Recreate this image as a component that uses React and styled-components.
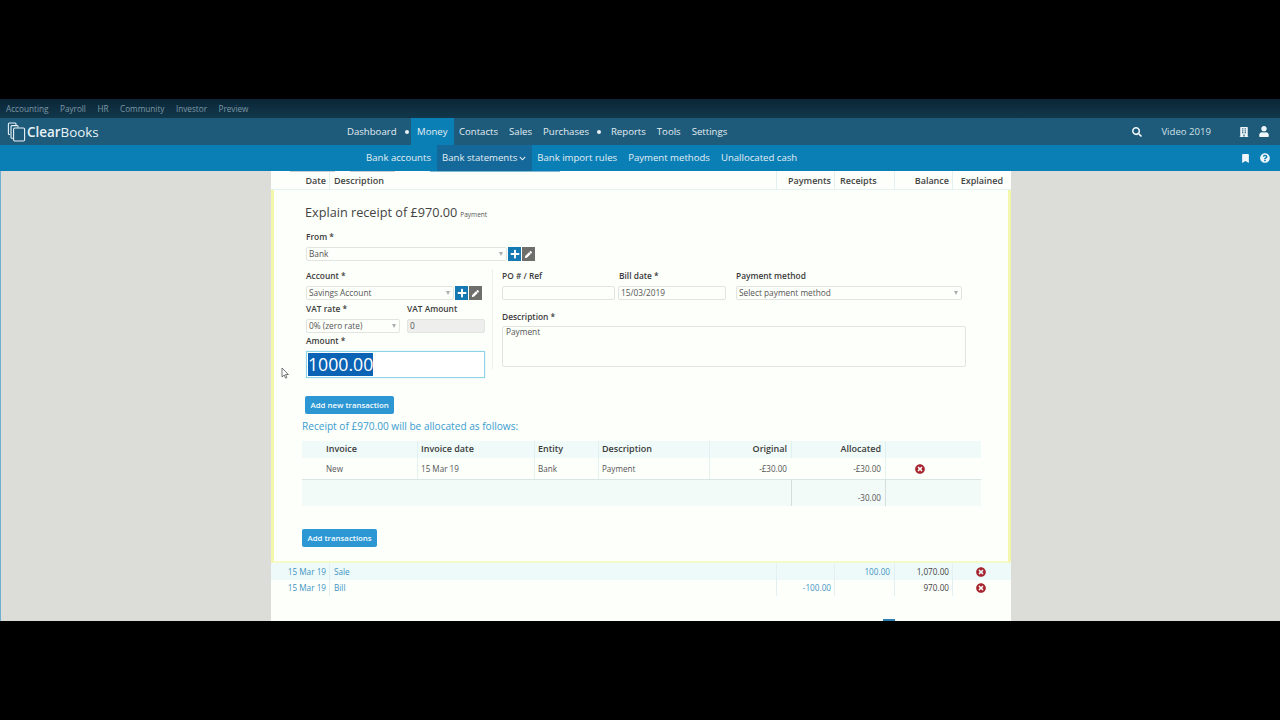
import React from 'react'
import styled, { createGlobalStyle } from 'styled-components'
import {
  FaSearch, FaBuilding, FaUser, FaBookmark, FaQuestionCircle,
  FaPlus, FaPen, FaChevronDown, FaTimesCircle,
} from 'react-icons/fa'

const Global = createGlobalStyle`
  html, body { margin: 0; background: #000; }
  body { font-family: "Open Sans", "Liberation Sans", sans-serif; color: #333; }
  * { box-sizing: border-box; }
`

const Letterbox = styled.div`
  width: 1280px;
  height: 720px;
  padding: 99px 0;
  background: #000;
  display: flex;
  flex-direction: column;
  overflow: hidden;
`

const TopBar = styled.div`
  height: 19px;
  flex: none;
  display: flex;
  align-items: center;
  gap: 11.5px;
  padding-left: 6px;
  background: linear-gradient(#0b2636, #12384c);
  a { font-size: 8.2px; color: #7d98a6; }
`

const Header = styled.header`
  height: 27px;
  flex: none;
  display: grid;
  grid-template-columns: 341.5px 1fr auto;
  background: #1e5a79;
  color: #dbe9f0;
`

const Brand = styled.div`
  display: flex;
  align-items: center;
  padding-left: 7px;
  font-size: 13.4px;
  color: #e8f2f7;
  b { font-weight: 600; }
`

const Nav = styled.nav`
  display: flex;
  align-items: stretch;
`

const NavItem = styled.a`
  display: flex;
  align-items: center;
  padding: 0 ${p => p.$pad || 5.5}px ${p => p.$lift || 0}px;
  font-size: 9.6px;
  color: #e3eef4;
  background: ${p => (p.$active ? p.$active : 'transparent')};
`

const NavDot = styled.span`
  align-self: center;
  width: 4px;
  height: 4px;
  margin: 0 ${p => p.$mr}px 0 3px;
  border-radius: 50%;
  background: #e8f2f7;
`

const HeaderRight = styled.div`
  display: flex;
  align-items: center;
  padding-right: 11px;
  font-size: 9.6px;
  svg { display: block; }
`

const Account = styled.span`
  margin: 0 28px 0 19px;
  color: #cfe0e9;
`

const UserIcon = styled(FaUser)`
  width: 10px;
  height: 11px;
  margin-left: 10px;
  color: #eef6fa;
`

const SubNav = styled.div`
  height: 26px;
  flex: none;
  display: grid;
  grid-template-columns: 360.5px 1fr auto;
  background: #0a7fb5;
`

const Chevron = styled(FaChevronDown)`
  width: 7px;
  height: 7px;
  margin: 2px 0 0 2px;
`

const SubRight = styled.div`
  display: flex;
  align-items: center;
  gap: 10px;
  padding-right: 10px;
  color: #eef6fa;
`

const Stage = styled.main`
  flex: 1;
  min-height: 0;
  display: flex;
  justify-content: center;
  position: relative;
  background: #dcddd9;
  border-left: 1px solid #6fb0d0;
  padding-left: 1px;
`

const Sheet = styled.div`
  width: 740px;
  position: relative;
  background: #fdfffb;
  font-size: 9px;
`

const ClippedRow = styled.span`
  position: absolute;
  left: 19px;
  top: 0;
  width: 270px;
  height: 1px;
  background: linear-gradient(90deg,
    #c9cfd2 0 45px, transparent 45px 60px,
    #c9cfd2 60px 105px, transparent 105px 140px,
    #7fb7d6 140px 270px);
`

const StatementGrid = styled.div`
  display: grid;
  grid-template-columns: 58px 447px 58px 60px 58px 59px;
  height: ${p => p.$h}px;
  background: ${p => p.$bg || 'transparent'};
  border-bottom: ${p => (p.$line ? '1px solid #e4f3f1' : 'none')};
`

const Cell = styled.div`
  display: flex;
  align-items: center;
  justify-content: ${p => p.$align || 'flex-end'};
  padding: 0 ${p => p.$padR ?? 3}px ${p => p.$lift || 0}px ${p => p.$padL ?? 4}px;
  font-size: ${p => (p.$head ? 9 : 8.2)}px;
  font-weight: ${p => (p.$head ? 600 : 400)};
  color: ${p => p.$color || '#444'};
  border-left: ${p => (p.$edge ? '1px solid #e2f0f2' : 'none')};
`

const FormPanel = styled.section`
  height: 373px;
  border-left: 3px solid #f3f7ac;
  border-right: 3px solid #f3f7ac;
  border-bottom: 2px solid #f6f9c8;
  padding-left: 28px;
  padding-top: 14px;
`

const Title = styled.h2`
  margin: 0 0 8px 3px;
  height: 18px;
  font-size: 12.7px;
  line-height: 16px;
  font-weight: 400;
  color: #444;
  small { font-size: 6.5px; margin-left: 3px; color: #555; }
`

const FormArea = styled.div`
  padding-left: 4px;
`

const Field = styled.div`
  display: flex;
  flex-direction: column;
  width: ${p => (p.$w ? `${p.$w}px` : 'auto')};
  margin-top: ${p => p.$top || 0}px;
`

const Label = styled.label`
  height: 14px;
  margin-bottom: ${p => p.$mb ?? 3}px;
  padding-left: ${p => p.$indent || 0}px;
  font-size: 8.4px;
  line-height: 14px;
  font-weight: 600;
  color: #3c3c3c;
`

const Control = styled.div`
  height: ${p => p.$h || 14}px;
  width: ${p => (p.$w ? `${p.$w}px` : '100%')};
  display: flex;
  align-items: ${p => (p.$top ? 'flex-start' : 'center')};
  justify-content: space-between;
  padding: 0 3px ${p => (p.$top ? 0 : 2)}px ${p => (p.$top ? 3 : 2)}px;
  border: 1px solid #e2e4e0;
  border-radius: 2px;
  background: ${p => p.$bg || '#fdfffb'};
  font-size: 8.3px;
  line-height: ${p => (p.$top ? 9 : 11)}px;
  color: #555;
`

const Caret = styled.span`
  width: 0;
  height: 0;
  margin-top: 2px;
  border-left: 2.5px solid transparent;
  border-right: 2.5px solid transparent;
  border-top: 4px solid #a9aeb0;
`

const SelectRow = styled.div`
  display: flex;
  width: ${p => p.$w}px;
  gap: 1px;
`

const IconBtn = styled.button`
  flex: none;
  width: 13px;
  height: 14px;
  padding: 0;
  border: 0;
  display: flex;
  align-items: center;
  justify-content: center;
  color: #fff;
  background: ${p => p.$bg};
`

const Columns = styled.div`
  display: flex;
  margin-top: 8px;
`

const LeftCol = styled.div`
  width: 179px;
  flex: none;
`

const RightCol = styled.div`
  width: 475px;
  margin-left: 7px;
  padding-left: 9px;
  border-left: 1px solid #eef0ec;
  height: 100px;
`

const Inline = styled.div`
  display: flex;
  gap: ${p => p.$gap || 0}px;
`

const AmountInput = styled.div`
  height: 27px;
  display: flex;
  align-items: center;
  padding-left: 1px;
  border: 1px solid #8fd3e6;
  box-shadow: 0 0 1px #a9def0;
  background: #fff;
  font-size: 17.7px;
  color: #fff;
  mark { background: #0a63b4; color: #fff; line-height: 23px; }
`

const Btn = styled.button`
  display: block;
  height: 18px;
  padding: 0 5.5px;
  border: 0;
  border-radius: 2px;
  background: #2c97d3;
  color: #f4fbff;
  font: 600 7.85px "Open Sans", sans-serif;
  margin-left: ${p => p.$left || 0}px;
  margin-top: ${p => p.$top || 0}px;
`

const AllocHead = styled.h3`
  margin: 5px 0 8px;
  height: 14px;
  font-size: 10.1px;
  line-height: 14px;
  font-weight: 400;
  color: #3a9ccf;
`

const Alloc = styled.div`
  width: 679px;
`

const AllocRow = styled.div`
  display: grid;
  grid-template-columns: 115px 117px 64px 111px 82px 94px 96px;
  height: ${p => p.$h}px;
  background: ${p => p.$bg || 'transparent'};
  border-bottom: ${p => (p.$line ? `1px solid ${p.$line}` : 'none')};
`

const AllocCell = styled.div`
  display: flex;
  align-items: ${p => (p.$end ? 'flex-end' : 'center')};
  justify-content: ${p => p.$align || 'flex-start'};
  padding: 0 ${p => p.$padR ?? 3}px ${p => (p.$end ? 3 : p.$head ? 2 : 0)}px ${p => p.$padL ?? 3}px;
  font-size: ${p => (p.$head ? 9 : 8.1)}px;
  font-weight: ${p => (p.$head ? 600 : 400)};
  color: ${p => (p.$head ? '#3c3c3c' : '#555')};
  border-left: ${p => (p.$edge ? `1px solid ${p.$edge}` : 'none')};
`

const FootSpacer = styled.div`
  grid-column: span 5;
`

const Del = styled(FaTimesCircle)`
  width: 10px;
  height: 10px;
  color: #a6252f;
`

const Pointer = styled.svg`
  position: absolute;
  left: 10px;
  top: 196px;
`

const ScrollTab = styled.span`
  position: absolute;
  left: 612px;
  bottom: 0;
  width: 12px;
  height: 2px;
  background: #2f7fae;
`

const Logo = () => (
  <svg width="20" height="20" viewBox="0 0 20 20" fill="none" stroke="#e8f2f7" strokeWidth="1.1">
    <path d="M9 3V2a1 1 0 0 0-1-1H2.4a1 1 0 0 0-1 1v9.5a1 1 0 0 0 1 1H3" />
    <path d="M11 5.5V4.6a1 1 0 0 0-1-1H5a1 1 0 0 0-1 1v10.6a1 1 0 0 0 1 1h1" />
    <rect x="6.6" y="6" width="11" height="13" rx="1.2" />
  </svg>
)

const Statement = ({ date, type, pay, rec, bal, bg }) => {
  const lift = bg ? 0 : 1
  return (
    <StatementGrid $h={bg ? 17 : 16} $bg={bg}>
      <Cell $color="#3e94c4" $lift={lift}>{date}</Cell>
      <Cell $edge $align="flex-start" $color="#3e94c4" $lift={lift}>{type}</Cell>
      <Cell $edge $color="#3e94c4" $lift={lift}>{pay}</Cell>
      <Cell $edge $color="#3e94c4" $padR={4} $lift={lift}>{rec}</Cell>
      <Cell $edge $color="#444" $lift={lift}>{bal}</Cell>
      <Cell $edge $align="center" $padL={0} $padR={2}><Del /></Cell>
    </StatementGrid>
  )
}

export default function App() {
  return (
    <Letterbox>
      <Global />
      <TopBar>
        <a>Accounting</a><a>Payroll</a><a>HR</a><a>Community</a><a>Investor</a><a>Preview</a>
      </TopBar>
      <Header>
        <Brand><Logo /><span><b>Clear</b>Books</span></Brand>
        <Nav>
          <NavItem>Dashboard</NavItem>
          <NavDot $mr={2} />
          <NavItem $active="#0a7fb5" $pad={6}>Money</NavItem>
          <NavItem>Contacts</NavItem>
          <NavItem>Sales</NavItem>
          <NavItem>Purchases</NavItem>
          <NavDot $mr={4} />
          <NavItem>Reports</NavItem>
          <NavItem>Tools</NavItem>
          <NavItem>Settings</NavItem>
        </Nav>
        <HeaderRight>
          <FaSearch size={10} color="#eef6fa" />
          <Account>Video 2019</Account>
          <FaBuilding size={10} color="#eef6fa" />
          <UserIcon />
        </HeaderRight>
      </Header>
      <SubNav>
        <span />
        <Nav>
          <NavItem $lift={1}>Bank accounts</NavItem>
          <NavItem $lift={1} $active="#15699a">Bank statements<Chevron /></NavItem>
          <NavItem $lift={1}>Bank import rules</NavItem>
          <NavItem $lift={1}>Payment methods</NavItem>
          <NavItem $lift={1}>Unallocated cash</NavItem>
        </Nav>
        <SubRight>
          <FaBookmark size={9} />
          <FaQuestionCircle size={10} />
        </SubRight>
      </SubNav>
      <Stage>
        <Sheet>
          <ClippedRow />
          <StatementGrid $h={19} $line>
            <Cell $head>Date</Cell>
            <Cell $head $edge $align="flex-start">Description</Cell>
            <Cell $head $edge>Payments</Cell>
            <Cell $head $edge $align="flex-start" $padL={5}>Receipts</Cell>
            <Cell $head $edge>Balance</Cell>
            <Cell $head $edge $padR={8}>Explained</Cell>
          </StatementGrid>
          <FormPanel>
            <Title>Explain receipt of £970.00<small>Payment</small></Title>
            <FormArea>
              <Field>
                <Label>From *</Label>
                <SelectRow $w={229}>
                  <Control>Bank<Caret /></Control>
                  <IconBtn $bg="#1479b3"><FaPlus size={10} /></IconBtn>
                  <IconBtn $bg="#6e6e6a"><FaPen size={7} /></IconBtn>
                </SelectRow>
              </Field>
              <Columns>
                <LeftCol>
                  <Field>
                    <Label>Account *</Label>
                    <SelectRow $w={176}>
                      <Control>Savings Account<Caret /></Control>
                      <IconBtn $bg="#1479b3"><FaPlus size={10} /></IconBtn>
                      <IconBtn $bg="#6e6e6a"><FaPen size={7} /></IconBtn>
                    </SelectRow>
                  </Field>
                  <Inline $gap={7}>
                    <Field $w={94} $top={2}>
                      <Label>VAT rate *</Label>
                      <Control>0% (zero rate)<Caret /></Control>
                    </Field>
                    <Field $w={78} $top={2}>
                      <Label>VAT Amount</Label>
                      <Control $bg="#eeeeec">0</Control>
                    </Field>
                  </Inline>
                  <Field $top={1}>
                    <Label>Amount *</Label>
                    <AmountInput><mark>1000.00</mark></AmountInput>
                  </Field>
                </LeftCol>
                <RightCol>
                  <Inline>
                    <Field $w={116}>
                      <Label>PO # / Ref</Label>
                      <Control $w={113} />
                    </Field>
                    <Field $w={118}>
                      <Label $indent={1}>Bill date *</Label>
                      <Control $w={108}>15/03/2019</Control>
                    </Field>
                    <Field $w={226}>
                      <Label>Payment method</Label>
                      <Control>Select payment method<Caret /></Control>
                    </Field>
                  </Inline>
                  <Field $top={10}>
                    <Label $mb={2}>Description *</Label>
                    <Control $h={41} $w={464} $top>Payment</Control>
                  </Field>
                </RightCol>
              </Columns>
            </FormArea>
            <Btn $left={3} $top={18}>Add new transaction</Btn>
            <AllocHead>Receipt of £970.00 will be allocated as follows:</AllocHead>
            <Alloc>
              <AllocRow $h={17} $bg="#f0faf8">
                <AllocCell $head $padL={24}>Invoice</AllocCell>
                <AllocCell $head $edge="#dff0ee">Invoice date</AllocCell>
                <AllocCell $head $edge="#dff0ee">Entity</AllocCell>
                <AllocCell $head $edge="#dff0ee">Description</AllocCell>
                <AllocCell $head $edge="#dff0ee" $align="flex-end" $padR={4}>Original</AllocCell>
                <AllocCell $head $edge="#dff0ee" $align="flex-end" $padR={4}>Allocated</AllocCell>
                <AllocCell $edge="#dff0ee" />
              </AllocRow>
              <AllocRow $h={22} $line="#d9e6e3">
                <AllocCell $padL={24}>New</AllocCell>
                <AllocCell $edge="#e4f2f0">15 Mar 19</AllocCell>
                <AllocCell $edge="#e4f2f0">Bank</AllocCell>
                <AllocCell $edge="#e4f2f0">Payment</AllocCell>
                <AllocCell $edge="#e4f2f0" $align="flex-end" $padR={4}>-£30.00</AllocCell>
                <AllocCell $align="flex-end" $padR={4}>-£30.00</AllocCell>
                <AllocCell $edge="#e4f2f0" $align="center" $padR={27} $padL={0}><Del /></AllocCell>
              </AllocRow>
              <AllocRow $h={26} $bg="#f3fbf9">
                <FootSpacer />
                <AllocCell $end $align="flex-end" $edge="#d5dedc" $padR={4}>-30.00</AllocCell>
                <AllocCell $edge="#d5dedc" />
              </AllocRow>
            </Alloc>
            <Btn $top={23}>Add transactions</Btn>
          </FormPanel>
          <Statement bg="#eefaf9" date="15 Mar 19" type="Sale" rec="100.00" bal="1,070.00" />
          <Statement date="15 Mar 19" type="Bill" pay="-100.00" bal="970.00" />
          <Pointer width="8" height="12" viewBox="0 0 8 12">
            <path d="M1 1v9l2.2-2 1.4 3.2 1.3-.6L4.6 7.5H7.4z" fill="#fff" stroke="#555" strokeWidth=".8" />
          </Pointer>
          <ScrollTab />
        </Sheet>
      </Stage>
    </Letterbox>
  )
}
